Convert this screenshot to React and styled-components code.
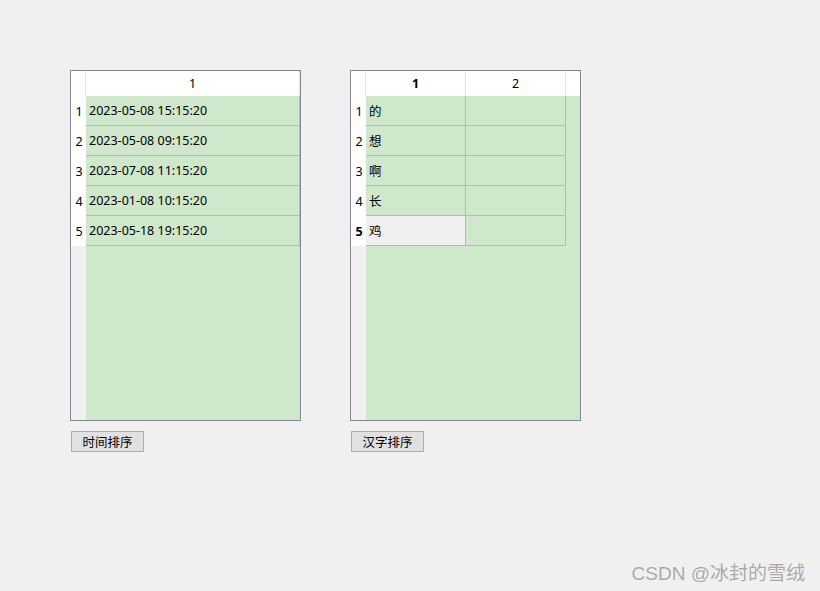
import React from "react";
import styled, { createGlobalStyle } from "styled-components";

const Global = createGlobalStyle`
  html, body { margin: 0; padding: 0; background: #f0f0f0; }
  body { width: 820px; height: 591px; overflow: hidden; font-family: "Noto Sans", "Noto Sans CJK SC", sans-serif; }
  #root { width: 820px; height: 591px; }
`;

const Page = styled.div`
  position: relative;
  width: 820px;
  height: 591px;
  box-sizing: border-box;
  padding: 70px 0 0 70px;
  display: flex;
  gap: 49px;
  align-items: flex-start;
`;

const Panel = styled.div`
  display: flex;
  flex-direction: column;
  gap: 10px;
  align-items: flex-start;
`;

const Frame = styled.div`
  width: 231px;
  height: 351px;
  box-sizing: border-box;
  border: 1px solid #828790;
  background: #f0f0f0;
  display: grid;
  grid-template-columns: 15px 1fr;
  grid-template-rows: 25px 1fr;
  font-size: 12.5px;
  color: #000;
`;

const Corner = styled.div`
  background: #fff;
  border-right: 1px solid #e5e5e5;
  box-sizing: border-box;
`;

const HHeader = styled.div`
  background: #fff;
  display: flex;
`;

const Section = styled.div`
  width: ${(p) => p.$w}px;
  flex: none;
  box-sizing: border-box;
  border-right: 1px solid #e5e5e5;
  display: flex;
  align-items: center;
  justify-content: center;
  font-weight: ${(p) => (p.$bold ? 700 : 400)};
`;

const VHeader = styled.div`
  display: flex;
  flex-direction: column;
`;

const RowNum = styled.div`
  height: 30px;
  background: #fff;
  display: flex;
  align-items: center;
  justify-content: center;
  padding-left: 1px;
  box-sizing: border-box;
  font-weight: ${(p) => (p.$bold ? 700 : 400)};
`;

const Body = styled.div`
  background: #cfe8cb;
  display: flex;
  flex-direction: column;
  align-items: flex-start;
`;

const Row = styled.div`
  display: flex;
  height: 30px;
`;

const Cell = styled.div`
  width: ${(p) => p.$w}px;
  height: 30px;
  box-sizing: border-box;
  border-right: 1px solid #aac3a6;
  border-bottom: 1px solid #aac3a6;
  background: ${(p) => (p.$current ? "#f0f0f0" : "transparent")};
  padding-left: 3px;
  display: flex;
  align-items: center;
  white-space: nowrap;
`;

const Button = styled.button`
  margin-left: 1px;
  width: 73px;
  height: 21px;
  box-sizing: border-box;
  border: 1px solid #adadad;
  background: #e1e1e1;
  font-family: "Noto Sans CJK SC", sans-serif;
  font-size: 12.5px;
  color: #000;
  padding: 0;
  line-height: 19px;
`;

const Watermark = styled.div`
  position: absolute;
  right: 15px;
  bottom: 5px;
  font-family: "Liberation Sans", "Noto Sans CJK SC", sans-serif;
  font-size: 19px;
  line-height: 24px;
  color: #a8a8a8;
  text-shadow: 0 0 1px #ffffff;
`;

function Table({ widths, rows, currentRow, currentCol }) {
  return (
    <Frame>
      <Corner />
      <HHeader>
        {widths.map((w, i) => (
          <Section key={i} $w={w} $bold={currentCol === i}>
            {i + 1}
          </Section>
        ))}
      </HHeader>
      <VHeader>
        {rows.map((_, r) => (
          <RowNum key={r} $bold={currentRow === r}>
            {r + 1}
          </RowNum>
        ))}
      </VHeader>
      <Body>
        {rows.map((row, r) => (
          <Row key={r}>
            {widths.map((w, c) => (
              <Cell key={c} $w={w} $current={currentRow === r && currentCol === c}>
                {row[c] || ""}
              </Cell>
            ))}
          </Row>
        ))}
      </Body>
    </Frame>
  );
}

export default function App() {
  return (
    <>
      <Global />
      <Page>
        <Panel>
          <Table
            widths={[214]}
            rows={[
              ["2023-05-08 15:15:20"],
              ["2023-05-08 09:15:20"],
              ["2023-07-08 11:15:20"],
              ["2023-01-08 10:15:20"],
              ["2023-05-18 19:15:20"],
            ]}
            currentRow={-1}
            currentCol={-1}
          />
          <Button>时间排序</Button>
        </Panel>
        <Panel>
          <Table
            widths={[100, 100]}
            rows={[["的"], ["想"], ["啊"], ["长"], ["鸡"]]}
            currentRow={4}
            currentCol={0}
          />
          <Button>汉字排序</Button>
        </Panel>
        <Watermark>CSDN @冰封的雪绒</Watermark>
      </Page>
    </>
  );
}
